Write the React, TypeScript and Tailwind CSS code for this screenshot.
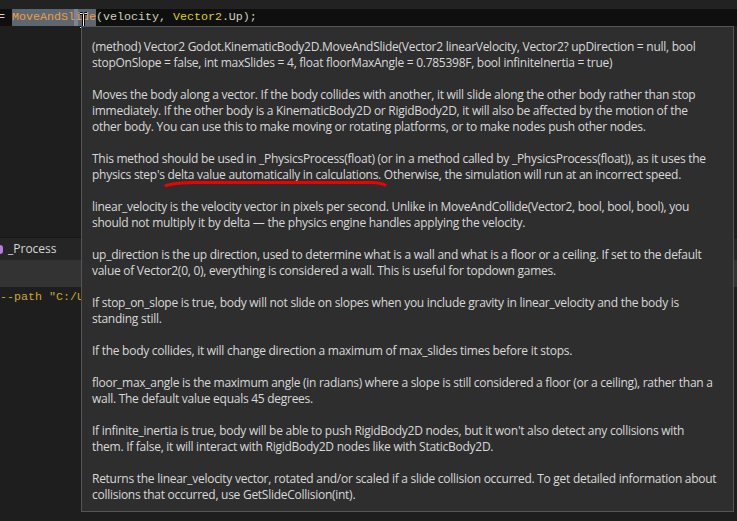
import React from "react";

const paras: string[][] = [
  [
    "(method) Vector2 Godot.KinematicBody2D.MoveAndSlide(Vector2 linearVelocity, Vector2? upDirection = null, bool",
    "stopOnSlope = false, int maxSlides = 4, float floorMaxAngle = 0.785398F, bool infiniteInertia = true)",
  ],
  [
    "Moves the body along a vector. If the body collides with another, it will slide along the other body rather than stop",
    "immediately. If the other body is a KinematicBody2D or RigidBody2D, it will also be affected by the motion of the",
    "other body. You can use this to make moving or rotating platforms, or to make nodes push other nodes.",
  ],
  [
    "This method should be used in _PhysicsProcess(float) (or in a method called by _PhysicsProcess(float)), as it uses the",
    "physics step's delta value automatically in calculations. Otherwise, the simulation will run at an incorrect speed.",
  ],
  [
    "linear_velocity is the velocity vector in pixels per second. Unlike in MoveAndCollide(Vector2, bool, bool, bool), you",
    "should not multiply it by delta \u2014 the physics engine handles applying the velocity.",
  ],
  [
    "up_direction is the up direction, used to determine what is a wall and what is a floor or a ceiling. If set to the default",
    "value of Vector2(0, 0), everything is considered a wall. This is useful for topdown games.",
  ],
  [
    "If stop_on_slope is true, body will not slide on slopes when you include gravity in linear_velocity and the body is",
    "standing still.",
  ],
  ["If the body collides, it will change direction a maximum of max_slides times before it stops."],
  [
    "floor_max_angle is the maximum angle (in radians) where a slope is still considered a floor (or a ceiling), rather than a",
    "wall. The default value equals 45 degrees.",
  ],
  [
    "If infinite_inertia is true, body will be able to push RigidBody2D nodes, but it won't also detect any collisions with",
    "them. If false, it will interact with RigidBody2D nodes like with StaticBody2D.",
  ],
  [
    "Returns the linear_velocity vector, rotated and/or scaled if a slide collision occurred. To get detailed information about",
    "collisions that occurred, use GetSlideCollision(int).",
  ],
];

const mono = { fontFamily: '"Liberation Mono", "DejaVu Sans Mono", monospace' };

export default function App() {
  return (
    <div className="relative w-[737px] h-[521px] overflow-hidden bg-[#1e1e1e]">
      <div className="flex flex-col h-full">
        <div className="h-[9px] bg-[#222222]" />
        <div
          className="h-[17px] bg-[#0f0f0f] flex items-center whitespace-pre text-[11.67px] leading-[17px] text-[#d4d4d4]"
          style={mono}
        >
          <span className="ml-[-2px]">= </span>
          <span className="relative bg-[#5c6772] text-[#ee9d3e] h-[17px] leading-[17px]">
            MoveAndSlide
            <span className="absolute left-[62px] top-0 w-[4px] h-[17px] bg-[#8a939c] opacity-70" />
          </span>
          <span className="text-[#cfcfbf]">(velocity, </span>
          <span className="text-[#dccf00]">Vector2</span>
          <span className="text-[#cfcfbf]">.Up);</span>
        </div>
        <div className="flex-1 flex flex-col">
          <div className="h-[211px]" />
          <div className="h-px bg-[#161616]" />
          <div
            className="h-[22px] bg-[#252526] flex items-center gap-[5px] text-[12px] text-[#d6d6d6]"
            style={{ fontFamily: '"Open Sans", sans-serif' }}
          >
            <span className="w-[3px] h-[9px] bg-[#b180d7] rounded-r-sm" />
            <span>_Process</span>
          </div>
          <div className="h-[27px] bg-[#333333]" />
          <div
            className="h-[22px] w-[81px] overflow-hidden flex items-center whitespace-pre text-[11.67px] text-[#cda82c]"
            style={mono}
          >
            {'--path "C:/U'}
          </div>
        </div>
      </div>

      {/* I-beam cursor */}
      <svg className="absolute left-[79px] top-[12px] pointer-events-none" width="9" height="17" viewBox="0 0 9 17">
        <path d="M1 1.5h2.5M5.5 1.5H8M4.5 2v13M1 15.5h2.5M5.5 15.5H8" stroke="#000" strokeWidth="3" fill="none" />
        <path d="M1 1.5h2.5M5.5 1.5H8M4.5 2v13M1 15.5h2.5M5.5 15.5H8" stroke="#f2f2f2" strokeWidth="1" fill="none" />
      </svg>

      {/* Tooltip */}
      <div
        className="absolute left-[81px] top-[26px] w-[653px] h-[486px] border border-[#555555] bg-[#2e2e2e] pl-[10px] pt-[12px] text-[12px] leading-[16px] tracking-[-0.27px] text-[#d9d9d9]"
        style={{ fontFamily: '"Open Sans", "Noto Sans", sans-serif' }}
      >
        <div className="flex flex-col gap-[16px]">
          {paras.map((p, i) => (
            <div key={i} className="flex flex-col">
              {p.map((l, j) => (
                <div key={j} className="whitespace-nowrap">
                  {l}
                </div>
              ))}
            </div>
          ))}
        </div>
      </div>

      {/* red underline */}
      <svg className="absolute left-0 top-0 pointer-events-none" width="737" height="521">
        <path
          d="M166 185.5 Q 176 182.5 195 182.5 L 372 182.5 Q 381 183 385 185"
          stroke="#f20000"
          strokeWidth="3"
          fill="none"
          strokeLinecap="round"
        />
      </svg>
    </div>
  );
}
